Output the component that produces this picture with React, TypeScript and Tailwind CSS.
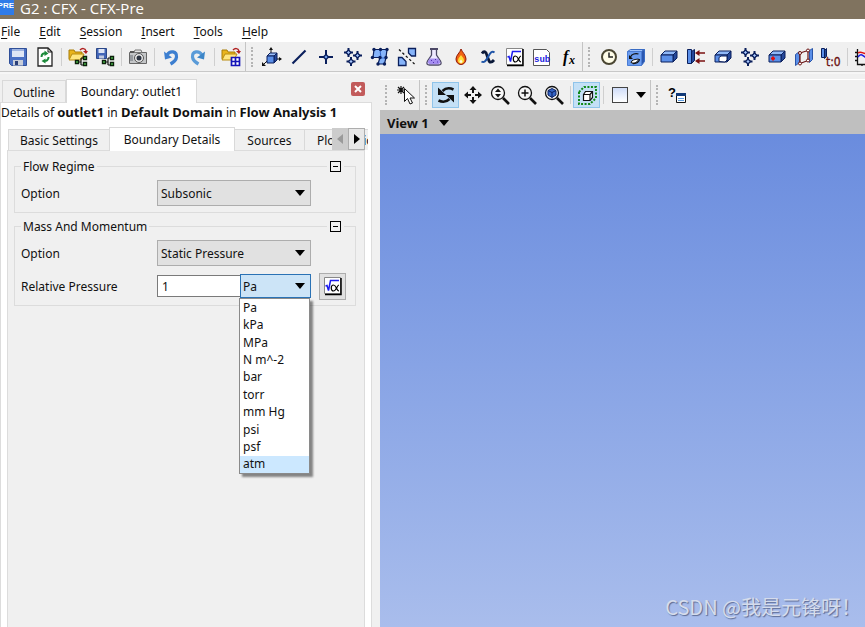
import { Fragment, useState } from "react";
import type { ReactNode } from "react";
import clsx from "clsx";

const UNITS = ["Pa", "kPa", "MPa", "N m^-2", "bar", "torr", "mm Hg", "psi", "psf", "atm"];
const MENUS = ["File", "Edit", "Session", "Insert", "Tools", "Help"];

const NAVY = "#0a1f5c";
const BLUE = "#5b8fe8";

/* ---------- icons ---------- */

function Icon({ children, w = 20 }: { children: ReactNode; w?: number }) {
  return (
    <svg width={w} height="20" viewBox={`0 0 ${w} 20`} fill="none" className="shrink-0" aria-hidden="true">
      {children}
    </svg>
  );
}

function Caret({ className }: { className?: string }) {
  return (
    <svg width="10" height="6" viewBox="0 0 10 6" className={className} aria-hidden="true">
      <path d="M0 0h10L5 6z" fill="#000" />
    </svg>
  );
}

const Folder = () => (
  <>
    <path d="M1 3h5l1 2h7v7H1z" fill="#e9b41c" stroke="#a87c08" />
    <path d="M4 7h12l-3 6H1z" fill="#ffe680" stroke="#b98c10" />
    <path d="M12 3c2-2 5-2 6 1" stroke="#b02020" strokeWidth="1.5" />
    <path d="M15 4h5l-2 3z" fill="#b02020" />
  </>
);

const Tree = () => (
  <>
    <path d="M10 15h3M13 11v7M13 11h3M13 18h3" stroke="#111" strokeWidth="1.2" />
    <path d="M7.5 13.5h3v3h-3zM15.5 9.5h3v3h-3zM15.5 15.5h3v3h-3z" fill="#53d153" stroke="#0b200b" strokeWidth="1.4" />
  </>
);

const SaveIcon = () => (
  <Icon>
    <path d="M1.5 1.5h17v17h-15l-2-2z" fill="#4a70c4" stroke="#2f4f98" />
    <path d="M4 2h12v8H4z" fill="#dfe6f5" />
    <path d="M4 2h12v2H4z" fill="#9fb4e0" />
    <path d="M5 13h10v5.500H5z" fill="#c9ced8" />
    <path d="M7 14h3v4H7z" fill="#2b3f78" />
  </Icon>
);

const RefreshIcon = () => (
  <Icon>
    <path d="M3 1h10l4 4v14H3z" fill="#fff" stroke="#222" strokeWidth="1.3" />
    <path d="M13 1v4h4" stroke="#222" />
    <path d="M6.500 10c0-3 2-4 4-3.800M13.500 10c0 3-2 4-4 3.800" stroke="#1c8a3a" strokeWidth="2" />
    <path d="M9.500 3.500l4 3-4 2.500zM10.500 11.500v5l-4-2.500z" fill="#1c8a3a" />
  </Icon>
);

const OpenTreeIcon = () => (
  <Icon>
    <Folder />
    <Tree />
  </Icon>
);

const SaveTreeIcon = () => (
  <Icon>
    <path d="M1.500 1.500h10v10h-10z" fill="#4266b8" stroke="#2b4788" />
    <path d="M3.500 2h6v4h-6z" fill="#dfe6f5" />
    <path d="M4 8.500h5v3H4z" fill="#c2cbe0" />
    <Tree />
  </Icon>
);

const CameraIcon = () => (
  <Icon>
    <path d="M1.500 5.500h17v11h-17z" fill="#c4c6c8" stroke="#666" />
    <path d="M7 3h6l1 2.500H6z" fill="#e4e4e4" stroke="#777" />
    <path d="M2 4h4v2H2z" fill="#555" />
    <circle cx="11" cy="11" r="4.500" fill="#e8e8e8" stroke="#555" />
    <circle cx="11" cy="11" r="2.500" fill="#2c3442" />
    <path d="M2 8h3v6H2z" fill="#969a9f" />
  </Icon>
);

const UndoIcon = () => (
  <Icon>
    <path d="M6 8c3-5 10-4 9.500 2-.3 3-2.500 5-6 7" stroke="#3d7fd0" strokeWidth="3.200" />
    <path d="M3 4.500l1 8 7-2z" fill="#3d7fd0" />
  </Icon>
);

const RedoIcon = () => (
  <Icon>
    <path d="M14 8c-3-5-10-4-9.500 2 .3 3 2.500 5 6 7" stroke="#5a9bd8" strokeWidth="3.200" />
    <path d="M17 4.500l-1 8-7-2z" fill="#3d86c8" />
  </Icon>
);

const OpenMeshIcon = () => (
  <Icon>
    <Folder />
    <path d="M10.500 10.500h8v8h-8zM10.500 14.500h8M14.500 10.500v8" fill="#fff" stroke="#1414b8" strokeWidth="1.700" />
  </Icon>
);

function Box({ children }: { children?: ReactNode }) {
  return (
    <Icon>
      <path d="M2 8l4-4h12l-4 4z" fill="#8fb8f8" stroke={NAVY} />
      <path d="M14 8l4-4v7l-4 4z" fill="#25489a" stroke={NAVY} />
      <path d="M2 8h12v7H2z" fill={BLUE} stroke={NAVY} />
      {children}
    </Icon>
  );
}

const DomainIcon = () => (
  <Icon>
    <path d="M9 8V2M13 12h6M5 14l-4 4" stroke="#111" />
    <path d="M7 3l2-3 2 3zM17 10l3 2-3 2zM0 15v4h4z" fill="#111" />
    <path d="M5 9l3-3h7l-3 3z" fill="#9cc0fa" stroke={NAVY} />
    <path d="M12 9l3-3v7l-3 3z" fill="#25489a" stroke={NAVY} />
    <path d="M5 9h7v7H5z" fill={BLUE} stroke={NAVY} />
  </Icon>
);

const LineIcon = () => (
  <Icon>
    <path d="M3.500 16.500l13-13" stroke={NAVY} strokeWidth="2.200" />
  </Icon>
);

const PointIcon = () => (
  <Icon>
    <path d="M10 3v14M3 10h14" stroke={NAVY} strokeWidth="2" />
    <path d="M10 6.500l3.500 3.500-3.500 3.500L6.500 10z" fill={NAVY} />
    <path d="M10 8.500l1.500 1.500-1.500 1.500L8.500 10z" fill="#7fb0ff" />
  </Icon>
);

const PointsIcon = () => (
  <Icon>
    {["translate(5.500 5.500)", "translate(14.500 8.500)", "translate(8 14.500)"].map((t) => (
      <g key={t} transform={t}>
        <path d="M0-4.500V4.500M-4.500 0h9" stroke={NAVY} strokeWidth="2" />
        <path d="M0-2.500L2.500 0 0 2.500-2.500 0z" fill="#a9c8ff" stroke={NAVY} strokeWidth="1.300" />
      </g>
    ))}
  </Icon>
);

const MeshIcon = () => (
  <Icon>
    <path d="M4 2.500h13l-1 8-1.500 6.500H8l2-6.500H3z" fill="#86b4fa" stroke={NAVY} strokeWidth="1.200" />
    <path d="M10.500 3c-1 3 1 5 0 8h5.500" stroke="#2f62c8" />
    {[[4, 2.500], [10.500, 2.500], [17, 2.500], [2.500, 10.500], [10, 10.500], [16, 10.500], [8, 17], [14.500, 17]].map(([x, y]) => (
      <circle key={`${x}-${y}`} cx={x} cy={y} r="1.700" fill={NAVY} />
    ))}
  </Icon>
);

const InterfaceIcon = () => (
  <Icon>
    <path d="M11.500 1.500h7v7.500h-4l-3-3zM1.500 10.500h3.500l4 4v4H1.500z" fill="#86b4fa" stroke={NAVY} strokeWidth="1.300" />
    <path d="M2 2.500l16 15" stroke="#111" strokeWidth="1.300" strokeDasharray="2.500 2.200" />
  </Icon>
);

const FlaskIcon = () => (
  <Icon>
    <path d="M7.500 2v6L3.500 14c-1.500 3 0 4 2 4h9c2 0 3.500-1 2-4l-4-6V2" fill="#eee9ff" stroke="#4c4866" strokeWidth="1.300" />
    <path d="M5.500 11.500h9l2 4-2 1.800h-9l-2-1.800z" fill="#a58df0" />
    <path d="M6 2h8" stroke="#4c4866" strokeWidth="2" />
    <path d="M7 13h1v1H7zM11 12h1v1h-1zM9 15h1v1H9zM13 14.500h1v1h-1z" fill="#5030b0" />
  </Icon>
);

const FlameIcon = () => (
  <Icon>
    <path d="M10 2c1 3 5 6 5 10 0 3-2 5.500-5 5.500S5 15 5 12c0-4 4-6 5-10z" fill="#f06414" stroke="#8f1a08" />
    <path d="M10 8c1 2 3 3 3 5.500 0 2-1.500 3-3 3s-3-1-3-3C7 11 9 10 10 8z" fill="#ffdf3a" />
    <path d="M10 12.500l1.500 2-1.500 2-1.500-2z" fill="#fffbe0" />
  </Icon>
);

const VarIcon = () => (
  <Icon>
    <path d="M4 6.500c2-3 4-2 5 2l1.500 4c1 3.500 3 3.500 5.500.5" stroke="#0a1838" strokeWidth="2.800" />
    <path d="M16.500 5.500c-2.500-2-4 0-6.500 4.500S6 16 3.500 14.500" stroke="#1f55a8" strokeWidth="2" />
  </Icon>
);

const ExprIcon = () => (
  <Icon>
    <path d="M1.500 1.500h16v16h-16z" fill="#fff" stroke="#888" />
    <path d="M18 2v16.500H2" stroke="#000" strokeWidth="1.500" />
    <path d="M2.500 10l1.500-.5 1.500 5L7.500 4.500H16" stroke="#1c1cf0" strokeWidth="1.500" />
    <path d="M16 9c-2 0-2.500 6-5.500 6-3 0-3-6 0-6s3 6 5.500 6" stroke="#000" strokeWidth="1.200" />
  </Icon>
);

const SubIcon = () => (
  <Icon>
    <path d="M1.500 2.500h13l3 3v13h-16z" fill="#fff" stroke="#555" />
    <text x="2" y="15" fontSize="9" fontWeight="700" fill="#1c1ce0" fontFamily="Liberation Mono, monospace">
      sub
    </text>
  </Icon>
);

const FuncIcon = () => (
  <Icon>
    <text x="4" y="15" fontSize="16" fontWeight="700" fontStyle="italic" fill="#000" fontFamily="Liberation Serif, serif">
      f
    </text>
    <text x="10" y="17" fontSize="12" fontWeight="700" fontStyle="italic" fill="#000" fontFamily="Liberation Serif, serif">
      x
    </text>
  </Icon>
);

const ClockIcon = () => (
  <Icon>
    <circle cx="10" cy="10" r="7" fill="#fffde8" stroke="#4a4632" strokeWidth="2" />
    <path d="M10 5.500V10h4" stroke="#222" strokeWidth="1.500" />
  </Icon>
);

const SolverIcon = () => (
  <Icon>
    <path d="M1.500 4.500l3-2h14l-3 2z" fill="#9cc0fa" stroke="#3a6cc4" />
    <path d="M15.500 4.500l3-2v12l-3 4z" fill="#2b57b0" stroke="#3a6cc4" />
    <path d="M1.500 4.500h14v14h-14z" fill="#6a9cf0" stroke="#4a7cd4" />
    <path d="M4.500 10c1-3 5-4 8-3M13.500 12c0 3-3 5-7 4.500" stroke="#111" strokeWidth="1.200" />
    <path d="M3 8v4h4z" fill="#111" />
    <path d="M5 15.500c1-3 4-3 7.500-3.500-.5 3-4 5-7.500 3.500z" fill="#fff" stroke="#111" />
  </Icon>
);

const BoundaryIcon = () => (
  <Icon>
    <path d="M1.500 2.500h4v14h-4z" fill={BLUE} stroke={NAVY} />
    <path d="M5.500 4.500l3-2v11l-3 3z" fill="#25489a" stroke={NAVY} />
    <path d="M12 6h7M12 14h7" stroke="#7a1010" strokeWidth="1.600" />
    <path d="M9 6l4.500-3v6zM9 14l4.500-3v6z" fill="#7a1010" />
  </Icon>
);

const SubdomainIcon = () => (
  <Box>
    <path d="M6 14.500v-4l2-1.500h6v4l-2 2z" fill="#fff" stroke={NAVY} />
  </Box>
);

const SourceIcon = () => (
  <Box>
    <path d="M6 9.500v4M4 11.500h4" stroke="#e01010" strokeWidth="2" />
  </Box>
);

const PeriodicIcon = () => (
  <Icon>
    <path d="M1.500 7.500l4-3v11l-4 3zM15.500 3.500l3-2v11l-3 3z" fill={BLUE} stroke="#2a55a8" />
    <path d="M6 6l8-2.500M14 3.500v10M6 16.500v-10M6 16.500l8-3" stroke="#6a1414" strokeWidth="1.200" />
    {[[6, 6], [14, 3.500], [6, 16.500], [14, 13.500]].map(([x, y]) => (
      <circle key={`${x}-${y}`} cx={x} cy={y} r="1.500" fill="#fff" stroke="#6a1414" />
    ))}
  </Icon>
);

const InitialIcon = () => (
  <Icon w={22}>
    <path d="M1.500 1.500h3v9h-3z" fill={BLUE} stroke={NAVY} />
    <path d="M4.500 3.500l2-2v8l-2 2z" fill="#25489a" stroke={NAVY} />
    <text x="6" y="19" fontSize="12" fill="#6a1010" stroke="#6a1010" strokeWidth=".3" fontFamily="DejaVu Sans Condensed, sans-serif">
      t:0
    </text>
  </Icon>
);

const ChartIcon = () => (
  <Icon>
    <path d="M3.500 2v15.500H19M1 5.500h2M1 9.500h2M1 13.500h2M8 17v2M13 17v2" stroke="#111" strokeWidth="1.300" />
    <path d="M4 6c4-3 6 3 12 0" stroke="#e01010" strokeWidth="1.500" />
    <path d="M4 10c4-6 6 2 12 2" stroke="#1c1ce0" strokeWidth="1.500" />
  </Icon>
);

const SelectIcon = () => (
  <Icon>
    <path d="M5 1v8M1 5h8M2 2l6 6M8 2L2 8" stroke="#111" strokeWidth="1.200" />
    <path d="M8.500 3.500v13l3-3 2.500 5.500 2.500-1-2.500-5h4.500z" fill="#fff" stroke="#111" />
  </Icon>
);

const RotateIcon = () => (
  <Icon>
    <path d="M17.500 4.500c-4-2-8-1.500-11 1.500M2.500 15.500c4 2 8 1.500 11-1.500" stroke="#111" strokeWidth="2.600" />
    <path d="M2 2.500v7.500h8zM18 17.500v-7.500h-8z" fill="#111" />
  </Icon>
);

const PanIcon = () => (
  <Icon>
    <path d="M10 4v4M10 12v4M4 10h4M12 10h4" stroke="#111" strokeWidth="2" />
    <path d="M6.500 5L10 1l3.500 4zM6.500 15l3.500 4 3.500-4zM5 6.500L1 10l4 3.500zM15 6.500l4 3.500-4 3.500z" fill="#111" />
  </Icon>
);

function Lens({ children }: { children: ReactNode }) {
  return (
    <Icon>
      <circle cx="8" cy="8" r="6.500" fill="#f8f8f8" stroke="#111" strokeWidth="1.300" />
      <path d="M13 13l6 6" stroke="#111" strokeWidth="2.600" />
      {children}
    </Icon>
  );
}

const ZoomIcon = () => (
  <Lens>
    <path d="M5 7l3-3.500L11 7zM5 9l3 3.500L11 9z" fill="#111" />
  </Lens>
);

const ZoomInIcon = () => (
  <Lens>
    <path d="M8 4.500v7M4.500 8h7" stroke="#111" strokeWidth="1.500" />
  </Lens>
);

const FitIcon = () => (
  <Lens>
    <path d="M8 3.500l4 2v4.500l-4 2.500-4-2.500V5.500z" fill="#3566c8" stroke={NAVY} />
    <path d="M4 5.500l4 2 4-2M8 7.500v5" stroke={NAVY} />
  </Lens>
);

const HighlightIcon = () => (
  <Icon>
    <path d="M2 7l5-5h12v11l-6 6H2z" stroke="#118a18" strokeWidth="2" strokeDasharray="2 1.500" />
    <path d="M6.500 9.500l2-3h7v6l-2.500 3h-6.500z" fill="#fff" stroke="#111" strokeWidth="1.200" />
    <path d="M6.500 9.500H13v6M13 9.500l2.500-3" stroke="#111" strokeWidth="1.200" />
  </Icon>
);

const HelpIcon = () => (
  <Icon>
    <text x="1" y="12" fontSize="13" fontWeight="700" fill="#000" fontFamily="Liberation Sans, sans-serif">
      ?
    </text>
    <path d="M9.500 8.500h9v9h-9z" fill="#fff" stroke="#111" />
    <path d="M9 8h10v3H9z" fill="#123a78" />
    <path d="M11 13.500h6M11 15.500h6" stroke="#5a9be0" />
  </Icon>
);

/* ---------- toolbar parts ---------- */

function ToolButton({ label, active, children }: { label: string; active?: boolean; children: ReactNode }) {
  return (
    <button
      type="button"
      aria-label={label}
      title={label}
      className={clsx(
        "flex h-[26px] w-[27px] shrink-0 items-center justify-center hover:bg-[#d8eafa]",
        active && "border border-[#8fc4ea] bg-[#c4e0f6]"
      )}
    >
      {children}
    </button>
  );
}

const Separator = () => (
  <span className="flex w-[6px] shrink-0 justify-center">
    <span className="h-[18px] w-px bg-[#cfcfcf]" />
  </span>
);

const Handle = () => (
  <span className="flex h-full w-3 shrink-0 items-center justify-center">
    <span className="h-5 border-l-2 border-dotted border-[#b4b4b4]" />
  </span>
);

type Tool = [string, () => ReactNode];

const FILE_TOOLS: Tool[][] = [
  [["Save", SaveIcon], ["Refresh", RefreshIcon]],
  [["Open case", OpenTreeIcon], ["Save case", SaveTreeIcon]],
  [["Snapshot", CameraIcon]],
  [["Undo", UndoIcon], ["Redo", RedoIcon]],
  [["Import mesh", OpenMeshIcon]],
];

const INSERT_TOOLS: Tool[][] = [
  [
    ["Domain", DomainIcon],
    ["Line", LineIcon],
    ["Point", PointIcon],
    ["Point cloud", PointsIcon],
    ["Mesh region", MeshIcon],
    ["Interface", InterfaceIcon],
    ["Material", FlaskIcon],
    ["Reaction", FlameIcon],
    ["Variable", VarIcon],
    ["Expression", ExprIcon],
    ["Subroutine", SubIcon],
    ["Function", FuncIcon],
  ],
];

const PHYSICS_TOOLS: Tool[][] = [
  [["Analysis type", ClockIcon], ["Solver", SolverIcon]],
  [
    ["New domain", Box],
    ["Boundary", BoundaryIcon],
    ["Subdomain", SubdomainIcon],
    ["Source point", PointsIcon],
    ["Source", SourceIcon],
    ["Domain interface", PeriodicIcon],
    ["Initialisation", InitialIcon],
  ],
  [["Monitor", ChartIcon]],
];

function ToolGroup({ groups }: { groups: Tool[][] }) {
  return (
    <>
      {groups.map((group, i) => (
        <Fragment key={i}>
          {i > 0 && <Separator />}
          {group.map(([label, Glyph]) => (
            <ToolButton key={label} label={label}>
              <Glyph />
            </ToolButton>
          ))}
        </Fragment>
      ))}
    </>
  );
}

/* ---------- form parts ---------- */

function Section({ title, children }: { title: string; children: ReactNode }) {
  return (
    <fieldset className="relative min-w-0 border border-[#dcdcdc] px-[6px] pt-[5px] pb-[6px]">
      <legend className="px-[2px] leading-[17px]">{title}</legend>
      <button
        type="button"
        aria-label={`Collapse ${title}`}
        className="absolute -top-[14px] right-[14px] flex size-[11px] items-center justify-center border border-black bg-[#f0f0f0] outline-3 outline-[#f0f0f0]"
      >
        <span className="h-px w-[5px] bg-black" />
      </button>
      <div className="flex flex-col gap-[7px]">{children}</div>
    </fieldset>
  );
}

function Row({ label, id, children }: { label: string; id: string; children: ReactNode }) {
  return (
    <div className="flex h-[26px] items-center">
      <label htmlFor={id} className="w-[136px] shrink-0 pt-[2px]">
        {label}
      </label>
      {children}
    </div>
  );
}

function OptionSelect({ id, options }: { id: string; options: string[] }) {
  return (
    <div className="relative w-[154px]">
      <select id={id} className="h-[26px] w-full appearance-none border border-[#adadad] bg-[#e1e1e1] pt-[2px] pl-[3px]">
        {options.map((o) => (
          <option key={o}>{o}</option>
        ))}
      </select>
      <Caret className="pointer-events-none absolute top-[10px] right-[6px]" />
    </div>
  );
}

function UnitSelect() {
  const [unit, setUnit] = useState("Pa");
  const [hovered, setHovered] = useState("atm");
  const [open, setOpen] = useState(true);

  return (
    <div className="relative w-[71px]">
      <select
        aria-label="Pressure unit"
        value={unit}
        onChange={(e) => setUnit(e.target.value)}
        onMouseDown={(e) => {
          e.preventDefault();
          setOpen(!open);
        }}
        className="block h-6 w-full appearance-none border border-[#2a72b5] bg-[#cce4f7] pt-[2px] pl-[2px]"
      >
        {UNITS.map((u) => (
          <option key={u}>{u}</option>
        ))}
      </select>
      <Caret className="pointer-events-none absolute top-[9px] right-[6px]" />
      {open && (
        <ul
          role="listbox"
          aria-label="Units"
          className="absolute top-full -left-px z-10 flex h-44 w-[71px] flex-col border border-[#8a8a8a] bg-white shadow-[3px_3px_2px_rgba(0,0,0,0.45)]"
        >
          {UNITS.map((u) => (
            <li
              key={u}
              role="option"
              aria-selected={u === unit}
              onMouseEnter={() => setHovered(u)}
              onClick={() => {
                setUnit(u);
                setOpen(false);
              }}
              className={clsx("flex flex-1 items-center pl-[3px] leading-4", u === hovered && "bg-[#cce8ff]")}
            >
              {u}
            </li>
          ))}
        </ul>
      )}
    </div>
  );
}

function DetailsPanel() {
  return (
    <aside className="flex w-[372px] shrink-0 flex-col pt-[5px]">
      <div role="tablist" className="z-10 -mb-px flex items-end pl-[2px]">
        <button role="tab" type="button" className="mb-px h-[22px] w-16 border border-b-0 border-[#d9d9d9] pt-[2px]">
          Outline
        </button>
        <button role="tab" type="button" aria-selected className="h-6 w-[131px] border border-b-0 border-[#d9d9d9] bg-white">
          Boundary: outlet1
        </button>
        <button
          type="button"
          aria-label="Close"
          className="mr-[7px] mb-[7px] ml-auto flex size-[14px] items-center justify-center rounded-xs bg-[#c25b5b]"
        >
          <svg width="8" height="8" viewBox="0 0 8 8" aria-hidden="true">
            <path d="M1 1l6 6M7 1L1 7" stroke="#fff" strokeWidth="2" />
          </svg>
        </button>
      </div>

      <div className="flex flex-1 flex-col border border-b-0 border-[#dcdcdc] bg-white pr-[6px] pl-[6px]">
        <p className="-ml-[6px] h-6 leading-[19px] whitespace-nowrap [&>b]:text-[13px]">
          Details of <b>outlet1</b> in <b>Default Domain</b> in <b>Flow Analysis 1</b>
        </p>

        <div className="relative z-10 -mr-[3px] -mb-px overflow-hidden">
          <div role="tablist" className="flex items-end pl-px whitespace-nowrap">
            <button role="tab" type="button" className="mb-px h-[21px] w-[101px] shrink-0 border border-r-0 border-b-0 border-[#d9d9d9] bg-[#f0f0f0] pt-[2px]">
              Basic Settings
            </button>
            <button role="tab" type="button" aria-selected className="h-6 w-[126px] shrink-0 border border-b-0 border-[#d9d9d9] bg-white">
              Boundary Details
            </button>
            <button role="tab" type="button" className="mb-px h-[21px] w-[70px] shrink-0 border border-b-0 border-l-0 border-[#d9d9d9] bg-[#f0f0f0] pt-[2px]">
              Sources
            </button>
            <button role="tab" type="button" className="mb-px h-[21px] w-24 shrink-0 border border-b-0 border-l-0 border-[#d9d9d9] bg-[#f0f0f0] pt-[2px] pl-3 text-left">
              Plot Options
            </button>
          </div>
          {/* scroll arrows sit over the clipped tab */}
          <div className="absolute top-px right-[3px] flex h-[22px]">
            <button type="button" aria-label="Scroll tabs left" disabled className="flex w-4 items-center justify-center bg-[#cccccc]">
              <svg width="6" height="10" viewBox="0 0 6 10" aria-hidden="true">
                <path d="M6 0v10L0 5z" fill="#9a9a9a" />
              </svg>
            </button>
            <button type="button" aria-label="Scroll tabs right" className="flex w-[17px] items-center justify-center border border-[#adadad] bg-[#e8e8e8]">
              <svg width="6" height="10" viewBox="0 0 6 10" aria-hidden="true">
                <path d="M0 0v10l6-5z" fill="#000" />
              </svg>
            </button>
          </div>
        </div>

        <form className="flex flex-1 flex-col gap-[5px] border border-b-0 border-[#dcdcdc] bg-[#f0f0f0] pt-[7px] pr-2 pb-4 pl-[6px]">
          <Section title="Flow Regime">
            <Row label="Option" id="flow-option">
              <OptionSelect id="flow-option" options={["Subsonic", "Supersonic", "Mixed"]} />
            </Row>
          </Section>
          <Section title="Mass And Momentum">
            <Row label="Option" id="mass-option">
              <OptionSelect id="mass-option" options={["Static Pressure", "Average Static Pressure", "Opening"]} />
            </Row>
            <Row label="Relative Pressure" id="rel-pressure">
              <input
                id="rel-pressure"
                defaultValue="1"
                className="h-[22px] w-[83px] border border-r-0 border-[#7a7a7a] bg-white pl-1"
              />
              <UnitSelect />
              <button
                type="button"
                aria-label="Enter expression"
                className="ml-2 flex size-[27px] shrink-0 items-center justify-center border border-[#adadad] bg-[#e1e1e1]"
              >
                <ExprIcon />
              </button>
            </Row>
          </Section>
        </form>
      </div>
    </aside>
  );
}

function Viewer() {
  return (
    <main className="ml-2 flex min-w-0 flex-1 flex-col pt-[5px]">
      <div className="flex h-[31px] items-center border-t border-white">
        <Handle />
        <ToolButton label="Select">
          <SelectIcon />
        </ToolButton>
        <span className="h-full w-px shrink-0 bg-[#c4c4c4]" />
        <Handle />
        <ToolButton label="Rotate" active>
          <RotateIcon />
        </ToolButton>
        <ToolButton label="Pan">
          <PanIcon />
        </ToolButton>
        <ToolButton label="Zoom">
          <ZoomIcon />
        </ToolButton>
        <ToolButton label="Zoom in">
          <ZoomInIcon />
        </ToolButton>
        <ToolButton label="Fit view">
          <FitIcon />
        </ToolButton>
        <Separator />
        <ToolButton label="Highlighting" active>
          <HighlightIcon />
        </ToolButton>
        <Separator />
        <ToolButton label="Background">
          <span className="size-4 border border-[#444] bg-linear-to-b from-[#cfdcf8] to-white" />
        </ToolButton>
        <button type="button" aria-label="Background options" className="flex h-[26px] w-[15px] items-center justify-center">
          <Caret />
        </button>
        <span className="ml-[2px] h-full w-px shrink-0 bg-[#c4c4c4]" />
        <Handle />
        <ToolButton label="Help">
          <HelpIcon />
        </ToolButton>
      </div>

      <div className="flex h-6 items-center bg-[#bfbfbf] pt-[2px] pl-[7px]">
        <button type="button" className="flex items-center gap-[10px] text-[13px] leading-5 font-bold">
          View 1
          <Caret />
        </button>
      </div>

      <div className="flex flex-1 items-end justify-end bg-linear-to-b from-[#6a8cde] to-[#a9bdec] pr-1 pb-[6px]">
        <p className="font-['Noto_Sans_CJK_SC',sans-serif] text-[20px] leading-7 text-[#d5dcec] [text-shadow:1px_1px_1px_#5d6c94]">
          CSDN @我是元锋呀！
        </p>
      </div>
    </main>
  );
}

export default function App() {
  return (
    <div className="flex min-h-screen flex-col overflow-hidden bg-[#f0f0f0] font-['Noto_Sans',sans-serif] text-[12px] text-[#111]">
      <header className="flex h-[19px] items-start bg-[#80735f] text-white">
        <span className="flex h-[15px] w-[14px] justify-end overflow-hidden bg-[#2f7be8] font-['Liberation_Sans',sans-serif] text-[8px] leading-3 font-bold">
          PRE
        </span>
        <h1 className="ml-[6px] font-['Open_Sans',sans-serif] text-[15px] leading-4">G2 : CFX - CFX-Pre</h1>
      </header>

      <nav className="flex h-[23px] items-center gap-[19px] bg-white pt-[2px] pl-px">
        {MENUS.map((m) => (
          <button key={m} type="button">
            <u className="underline-offset-2">{m[0]}</u>
            {m.slice(1)}
          </button>
        ))}
      </nav>

      <div className="flex h-[30px] items-center overflow-hidden border-b border-[#c8c8c8] pl-1">
        <ToolGroup groups={FILE_TOOLS} />
        <span className="ml-px h-full w-px shrink-0 bg-[#c4c4c4]" />
        <Handle />
        <ToolGroup groups={INSERT_TOOLS} />
        <span className="h-full w-px shrink-0 bg-[#c4c4c4]" />
        <Handle />
        <ToolGroup groups={PHYSICS_TOOLS} />
      </div>

      <div className="flex flex-1 border-t-2 border-[#f6f6f6]">
        <DetailsPanel />
        <Viewer />
      </div>
    </div>
  );
}
